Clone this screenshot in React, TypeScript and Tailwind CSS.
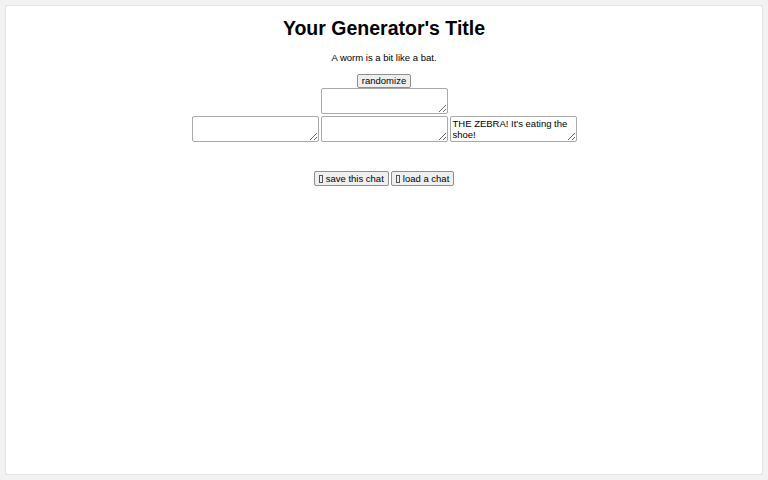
import React from "react";

const box =
  "block w-[127px] h-[26px] resize border border-[#a9a9a9] rounded-[2px] bg-white px-[2px] py-[1px] text-[9.5px] leading-[11px] text-black outline-none";

const btn =
  "px-[4px] border border-[#8f8f8f] rounded-[2px] bg-[#efefef] text-[9.5px] leading-[12px] text-black";

// missing-glyph box, as the reference shows for the emoji
function Tofu() {
  return <span className="inline-block w-[4px] h-[8px] mr-[3px] border border-[#555] align-[-1px]" />;
}

export default function App() {
  return (
    <div className="h-[480px] bg-[#f2f2f2] p-[5px] font-['Liberation_Sans',Arial,sans-serif]">
      <div className="h-full border border-[#e3e3e3] bg-white flex flex-col items-center">
        <h1 className="mt-[11px] text-[19.5px] leading-[23px] font-bold text-black">
          Your Generator's Title
        </h1>
        <p className="mt-[12px] text-[9.5px] leading-[12px] text-black">A worm is a bit like a bat.</p>
        <button className={`mt-[10px] h-[14px] ${btn}`}>randomize</button>
        <textarea className={box} defaultValue="" />
        <div className="mt-[2px] flex gap-[2px]">
          <textarea className={box} defaultValue="" />
          <textarea className={box} defaultValue="" />
          <textarea className={box} defaultValue="THE ZEBRA! It's eating the shoe!" />
        </div>
        <div className="mt-[29px] flex gap-[2px]">
          <button className={`h-[15px] ${btn}`}>
            <Tofu />save this chat
          </button>
          <button className={`h-[15px] ${btn}`}>
            <Tofu />load a chat
          </button>
        </div>
      </div>
    </div>
  );
}
